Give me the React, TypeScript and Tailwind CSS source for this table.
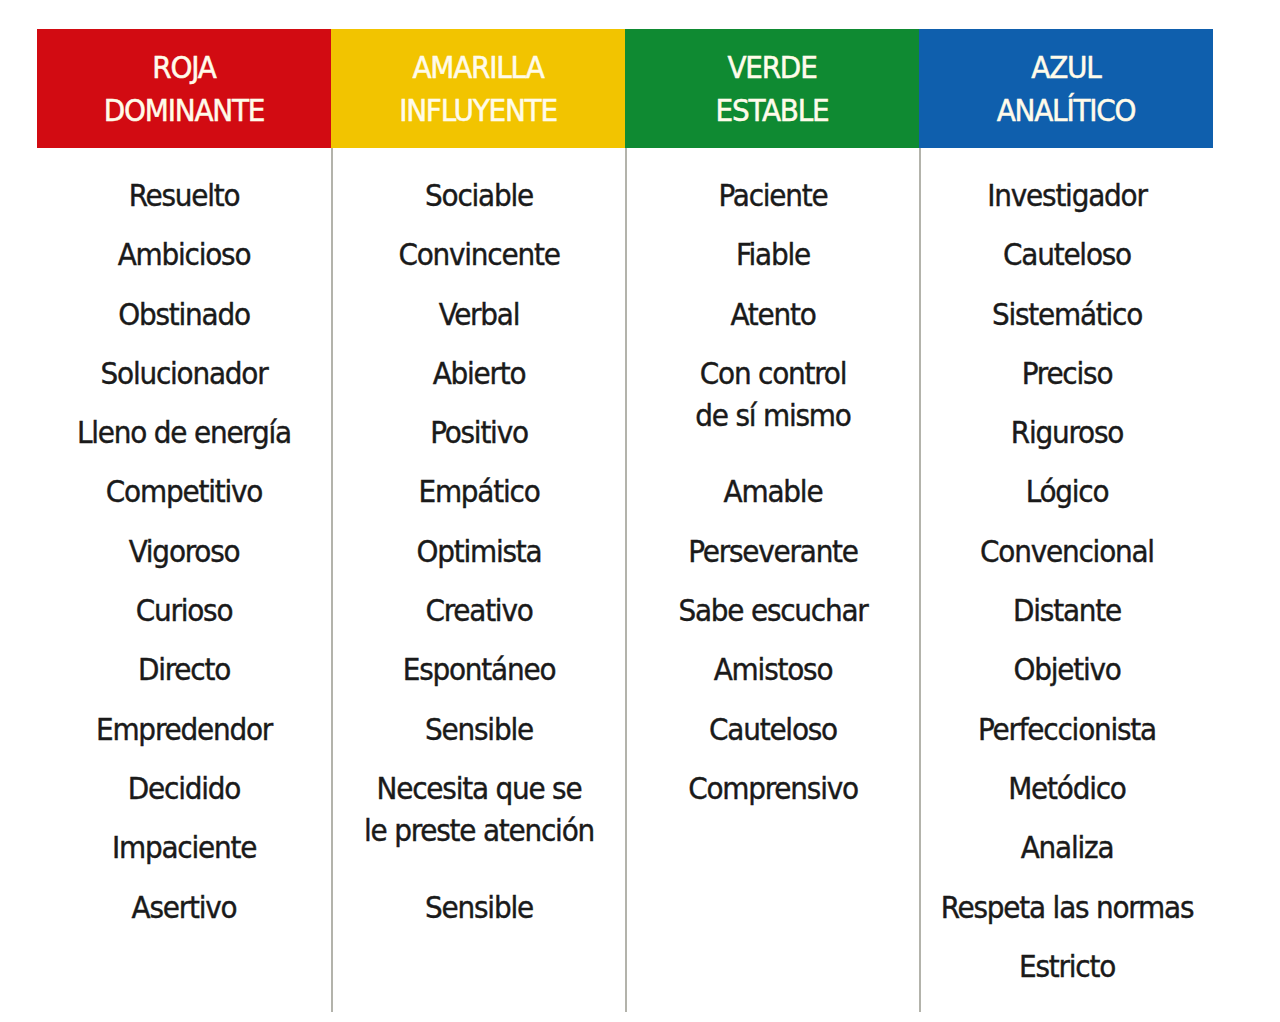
import React from "react";

type Item = string | [string, string];

const columns: { title: [string, string]; bg: string; items: Item[] }[] = [
  {
    title: ["ROJA", "DOMINANTE"],
    bg: "bg-[#d20b12]",
    items: [
      "Resuelto",
      "Ambicioso",
      "Obstinado",
      "Solucionador",
      "Lleno de energía",
      "Competitivo",
      "Vigoroso",
      "Curioso",
      "Directo",
      "Empredendor",
      "Decidido",
      "Impaciente",
      "Asertivo",
    ],
  },
  {
    title: ["AMARILLA", "INFLUYENTE"],
    bg: "bg-[#f2c400]",
    items: [
      "Sociable",
      "Convincente",
      "Verbal",
      "Abierto",
      "Positivo",
      "Empático",
      "Optimista",
      "Creativo",
      "Espontáneo",
      "Sensible",
      ["Necesita que se", "le preste atención"],
      "Sensible",
    ],
  },
  {
    title: ["VERDE", "ESTABLE"],
    bg: "bg-[#0f8a32]",
    items: [
      "Paciente",
      "Fiable",
      "Atento",
      ["Con control", "de sí mismo"],
      "Amable",
      "Perseverante",
      "Sabe escuchar",
      "Amistoso",
      "Cauteloso",
      "Comprensivo",
    ],
  },
  {
    title: ["AZUL", "ANALÍTICO"],
    bg: "bg-[#0f5fad]",
    items: [
      "Investigador",
      "Cauteloso",
      "Sistemático",
      "Preciso",
      "Riguroso",
      "Lógico",
      "Convencional",
      "Distante",
      "Objetivo",
      "Perfeccionista",
      "Metódico",
      "Analiza",
      "Respeta las normas",
      "Estricto",
    ],
  },
];

const font = {
  fontFamily:
    '"Liberation Sans Narrow", "DejaVu Sans Condensed", "Roboto Condensed", "Liberation Sans", sans-serif',
};

export default function App() {
  return (
    <div className="w-full h-[1022px] bg-white pt-[29px] pl-[37px]" style={font}>
      <div className="grid grid-cols-[294px_294px_294px_294px] w-[1176px]">
        {columns.map((col, ci) => (
          <div key={ci} className="flex flex-col">
            <div
              className={`${col.bg} h-[119px] flex flex-col items-center justify-center text-[#fffbea] text-[31px] leading-[43px] tracking-[-1.2px] [-webkit-text-stroke:0.5px_#fffbea]`}
            >
              <div>{col.title[0]}</div>
              <div>{col.title[1]}</div>
            </div>
            <div
              className={`h-[864px] pt-[17.35px] flex flex-col items-center text-[#1a1a1a] text-[31px] leading-[42px] tracking-[-1.2px] [-webkit-text-stroke:0.4px_#1a1a1a] ${
                ci > 0 ? "border-l-2 border-[#b3b3ab]" : ""
              }`}
            >
              {col.items.map((it, i) =>
                typeof it === "string" ? (
                  <div key={i} className="h-[59.3px] pt-[8.65px] text-center whitespace-nowrap">
                    {it}
                  </div>
                ) : (
                  <div key={i} className="h-[118.6px] pt-[8.65px] text-center whitespace-nowrap">
                    <div>{it[0]}</div>
                    <div>{it[1]}</div>
                  </div>
                )
              )}
            </div>
          </div>
        ))}
      </div>
    </div>
  );
}
